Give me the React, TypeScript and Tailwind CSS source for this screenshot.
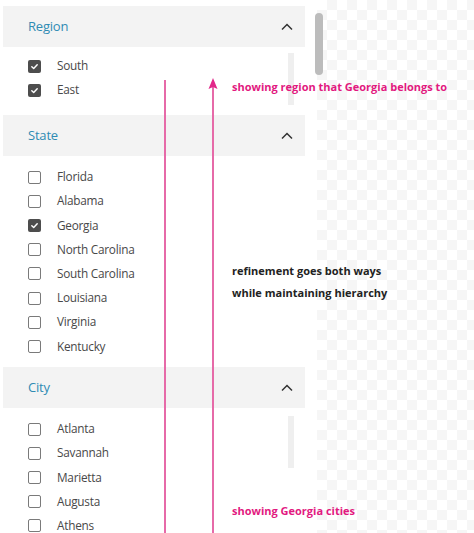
import React from "react";

type Item = { label: string; checked?: boolean };

const regions: Item[] = [
  { label: "South", checked: true },
  { label: "East", checked: true },
];

const states: Item[] = [
  { label: "Florida" },
  { label: "Alabama" },
  { label: "Georgia", checked: true },
  { label: "North Carolina" },
  { label: "South Carolina" },
  { label: "Louisiana" },
  { label: "Virginia" },
  { label: "Kentucky" },
];

const cities: Item[] = [
  { label: "Atlanta" },
  { label: "Savannah" },
  { label: "Marietta" },
  { label: "Augusta" },
  { label: "Athens" },
];

const Checkbox = ({ checked }: { checked?: boolean }) =>
  checked ? (
    <span className="flex h-[13px] w-[13px] items-center justify-center rounded-[2px] bg-[#4d4d4d]">
      <svg width="9" height="9" viewBox="0 0 10 10" fill="none">
        <path d="M2 5.2 4.1 7.2 8 3" stroke="#fff" strokeWidth="1.6" strokeLinecap="round" strokeLinejoin="round" />
      </svg>
    </span>
  ) : (
    <span className="h-[13px] w-[13px] rounded-[2px] border-[1.5px] border-[#7a7a7a] bg-white" />
  );

const Header = ({ title }: { title: string }) => (
  <div className="flex h-[41px] items-center justify-between bg-[#f3f3f3] pl-[25px] pr-[12px]">
    <span className="text-[13px] tracking-[-0.2px] text-[#2f8bb3]">{title}</span>
    <svg width="12" height="8" viewBox="0 0 12 8" fill="none">
      <path d="M1 6.5 6 1.5 11 6.5" stroke="#333" strokeWidth="1.5" />
    </svg>
  </div>
);

const List = ({ items, track }: { items: Item[]; track?: boolean }) => (
  <div className="relative">
    <ul>
      {items.map((it) => (
        <li key={it.label} className="flex h-[24.2px] items-center gap-[16px] pl-[25px]">
          <Checkbox checked={it.checked} />
          <span className="text-[11.8px] tracking-[-0.25px] text-[#484848]">{it.label}</span>
        </li>
      ))}
    </ul>
    {track && <div className="absolute right-[11px] top-[-1px] h-[52px] w-[6px] bg-[#efefef]" />}
  </div>
);

const Note = ({ children, pink }: { children: React.ReactNode; pink?: boolean }) => (
  <p className={`text-[11px] font-bold leading-[22px] ${pink ? "text-[#e2197f]" : "text-[#222]"}`}>{children}</p>
);

const App = () => {
  return (
    <div className="relative h-[533px] w-[474px] overflow-hidden bg-white font-['Open_Sans',sans-serif]">
      <div className="flex h-full">
        <div className="w-[305px] pl-[3px] pt-[6px]">
          <Header title="Region" />
          <div className="h-[68px] pt-[7px]">
            <List items={regions} track />
          </div>
          <Header title="State" />
          <div className="h-[211px] pt-[9px]">
            <List items={states} />
          </div>
          <Header title="City" />
          <div className="pt-[9px]">
            <List items={cities} track />
          </div>
        </div>
        <div className="w-[12px]" />
        <div className="relative flex-1 bg-[conic-gradient(#f6f6f6_25%,#ffffff_0_50%,#f6f6f6_0_75%,#ffffff_0)] bg-size-[20px_20px]">
          <div className="absolute left-[-2px] top-[13px] h-[62px] w-[8px] rounded-full bg-[#bcbcbc]" />
        </div>
      </div>

      {/* annotations */}
      <div className="absolute left-[164px] top-[80px] h-[460px] w-[1.5px] bg-[#e66aa8]" />
      <div className="absolute left-[212px] top-[86px] h-[460px] w-[1.5px] bg-[#e66aa8]" />
      <svg className="absolute left-[208px] top-[78px]" width="10" height="12" viewBox="0 0 10 12">
        <path d="M5 0 9.5 11 5 9 0.5 11Z" fill="#e2288a" />
      </svg>
      <div className="absolute left-[232px] top-[76px]">
        <Note pink>showing region that Georgia belongs to</Note>
      </div>
      <div className="absolute left-[232px] top-[260px]">
        <Note>refinement goes both ways</Note>
        <Note>while maintaining hierarchy</Note>
      </div>
      <div className="absolute left-[232px] top-[500px]">
        <Note pink>showing Georgia cities</Note>
      </div>
    </div>
  );
};

export default App;
